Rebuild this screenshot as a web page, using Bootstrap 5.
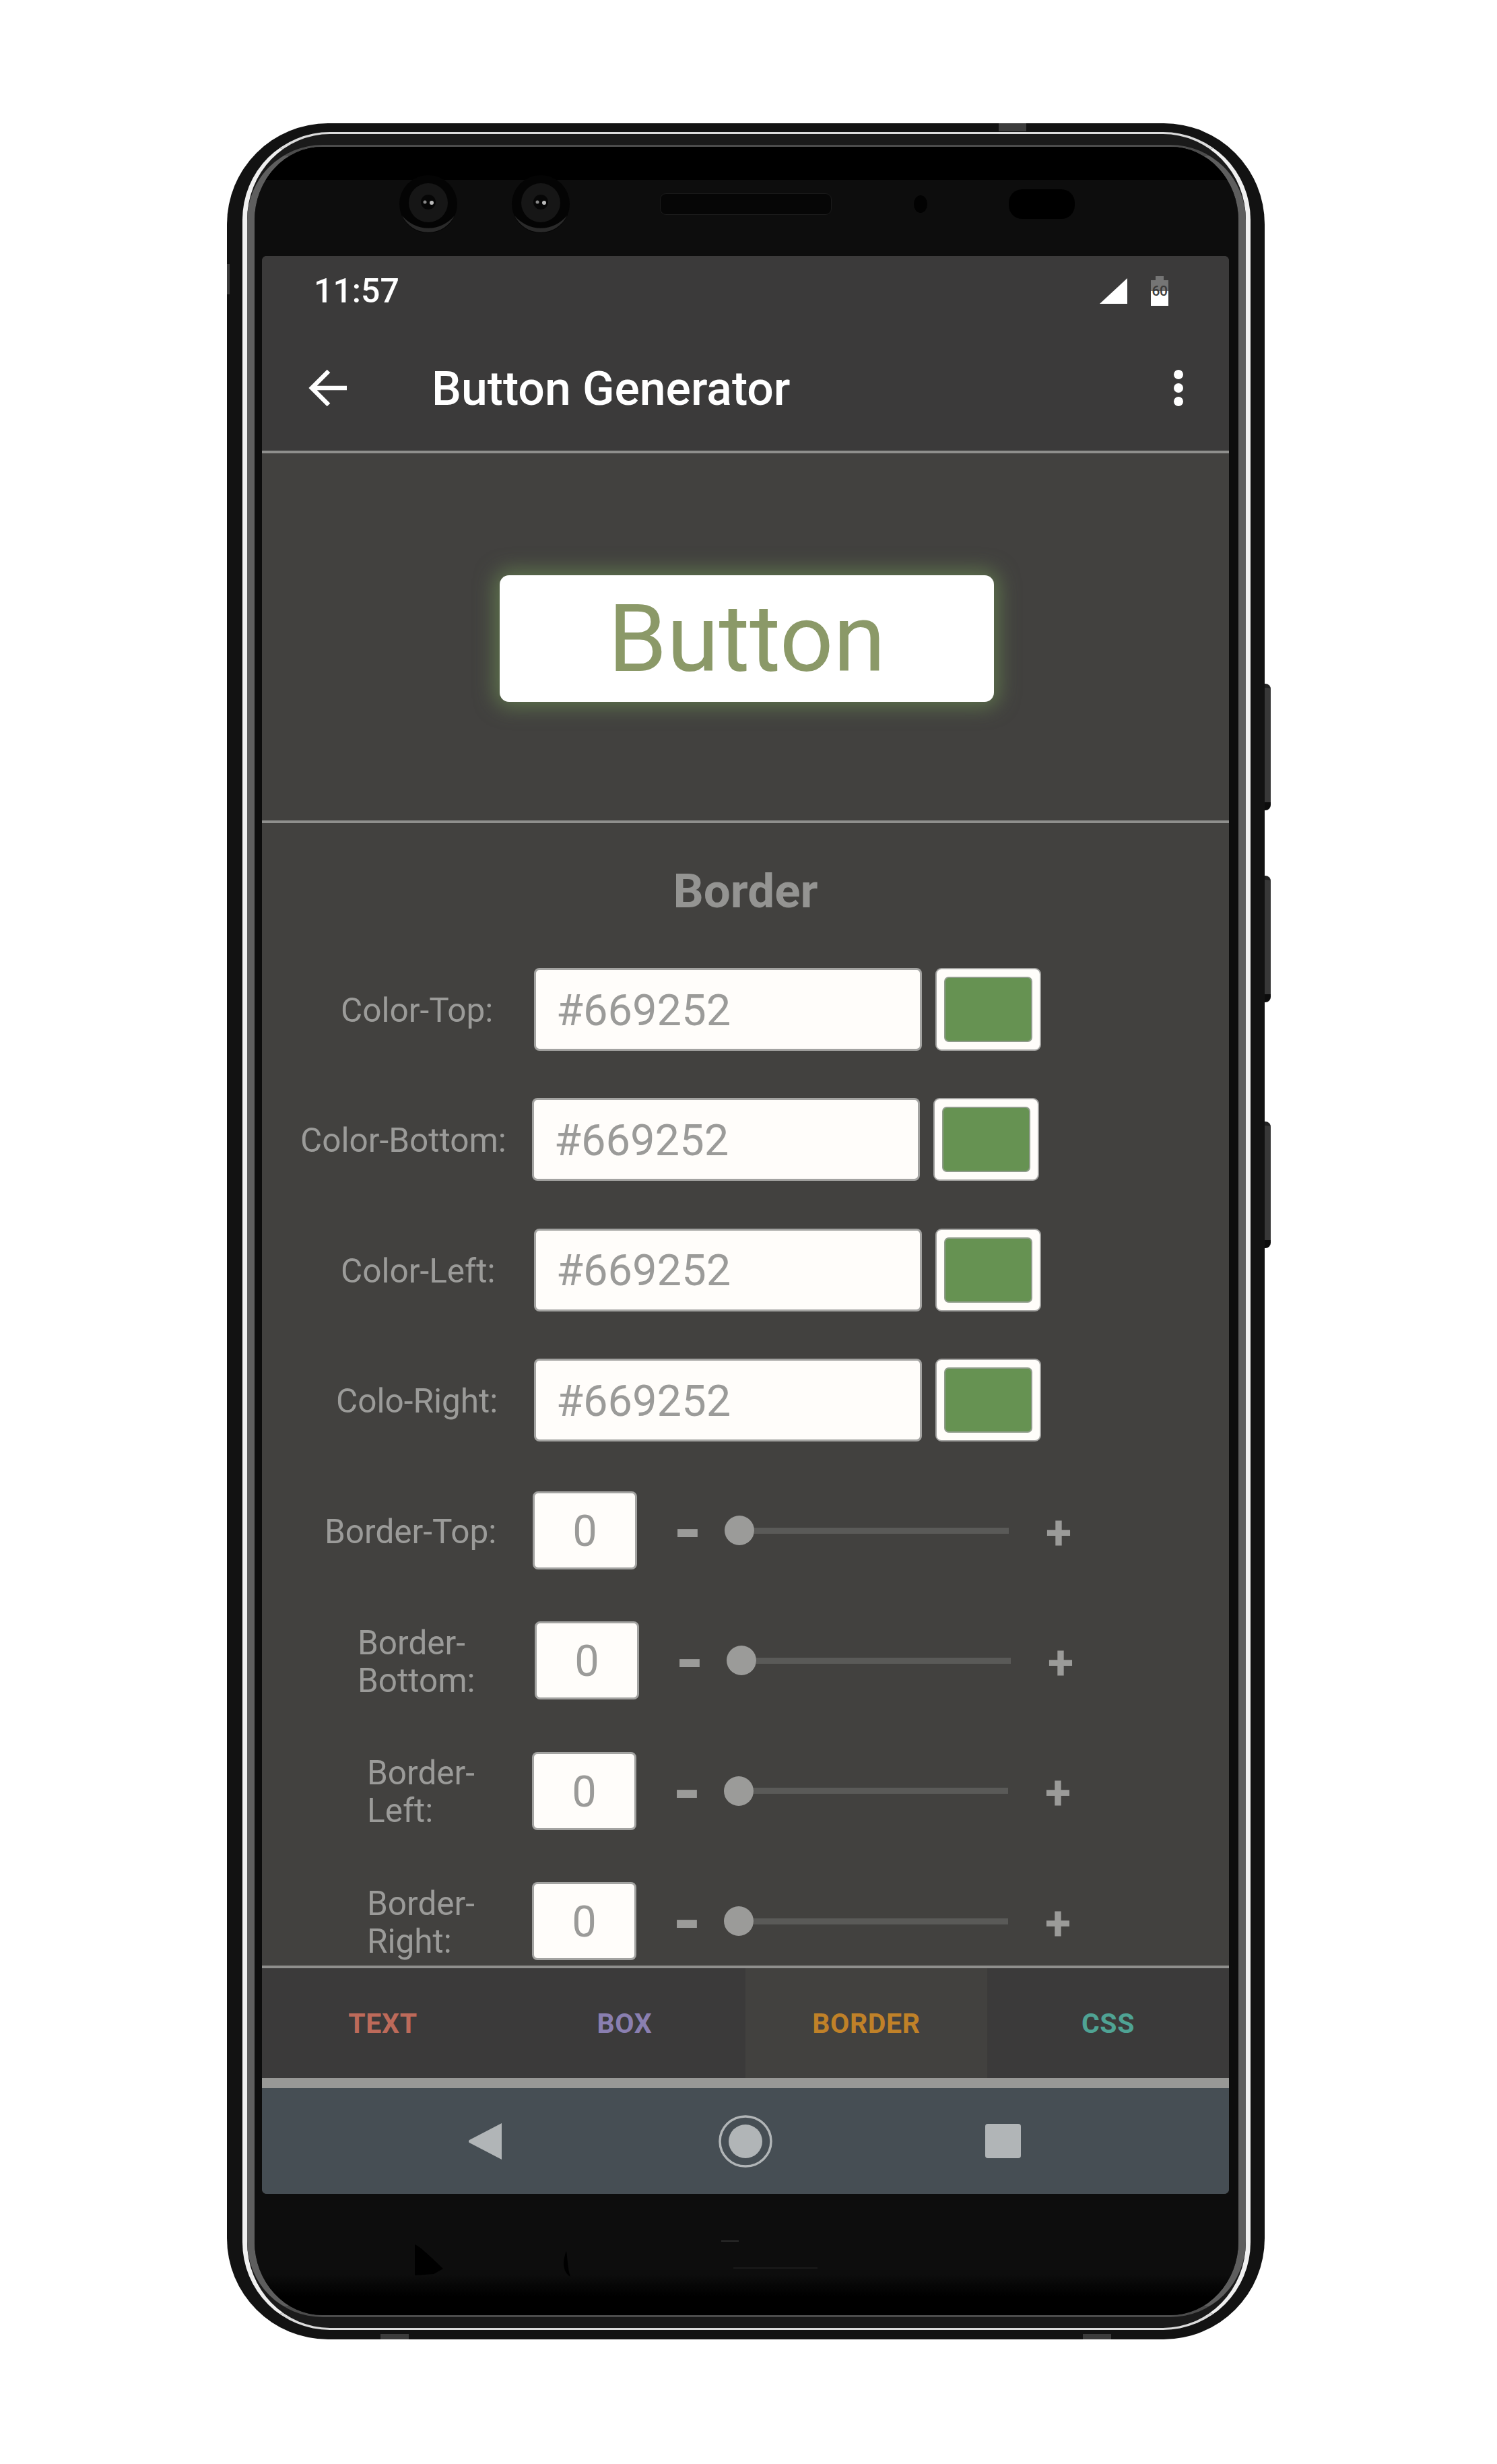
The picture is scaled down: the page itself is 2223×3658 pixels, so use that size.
<!DOCTYPE html>
<html lang="en">
<head>
<meta charset="utf-8">
<title>Button Generator</title>
<link rel="stylesheet" href="https://cdn.jsdelivr.net/npm/bootstrap@5.3.0/dist/css/bootstrap.min.css">
<style>
html,body{margin:0;background:#fff;font-family:Roboto,"Liberation Sans",sans-serif;}
.stage{padding:183px 0 0 337px;width:2223px;height:3658px;}
.ph-shell{position:relative;width:1541px;height:3290px;background:#121212;border-radius:150px;padding:13px 21px 14px 23px;flex:none;}
.ph-ring{height:100%;border-style:solid;border-color:#dcdcdc #f0f0f0;border-width:3px 7px;border-radius:130px;background:#1a1a1a;padding:16px 0;}
.ph-mid{height:100%;border-style:solid;border-color:#4c4c4c #5e5e5e;border-width:3px 11px;border-radius:112px;overflow:hidden;}
.ph-bezel{height:100%;padding:42px 14px 0 11px;background:linear-gradient(#000 49px,transparent 49px),linear-gradient(to top,#000 28px,#0d0d0d 60px);}
.ph-sensors{height:86px;margin:0 0 34px;}
.cam-a{margin-left:204px;}
.cam-b{margin-left:81px;}
.speaker{margin-left:134px;width:255px;height:32px;border-radius:9px;background:#060606;border:1px solid #1b1b1b;}
.sensor-dot{margin-left:122px;width:20px;height:26px;border-radius:50%;background:#020202;}
.sensor-pill{margin-left:121px;width:98px;height:44px;border-radius:20px;background:#000;}
.ph-side{width:9px;flex:none;}
.side-key{width:9px;height:188px;background:#383838;border-radius:0 8px 8px 0;border-top:6px solid #222;border-bottom:12px solid #0c0c0c;}
.key-a{margin-top:832px;}
.key-b{margin-top:97px;}
.key-c{margin-top:177px;}
.bump{position:absolute;background:#3c3c3c;}
.bump-top{left:1146px;top:0;width:41px;height:12px;}
.bump-left{left:0;top:209px;width:4px;height:45px;}
.bump-bl{left:228px;bottom:0;width:42px;height:8px;}
.bump-br{left:1271px;bottom:0;width:42px;height:8px;}
.screen{width:1436px;height:2877px;border-radius:7px;overflow:hidden;background:#42413f;}
.status-row{height:103px;background:#3b3a3a;padding:0 90px 0 77px;color:#fff;}
.status-time{font-size:50px;font-weight:500;line-height:1;}
.batt{margin-left:35px;width:26px;height:44px;position:relative;}
.batt-nub{width:12px;height:6px;background:#757575;margin:0 auto;}
.batt-body{width:26px;height:38px;background:linear-gradient(#757575 42%,#fff 42%);color:#3b3a3a;font-size:21px;font-weight:500;line-height:1;text-align:center;padding-top:6px;letter-spacing:-.5px;}
.app-row{height:186px;background:#3b3a3a;padding:0 68px 0 69px;color:#fff;}
.app-title{margin-left:126px;font-size:69.7px;font-weight:500;line-height:1;padding-top:3px;}
.rule-line{height:4px;background:#8f8f8d;flex:none;}
.preview{height:545px;padding:181px 0 0 353px;}
.demo-btn{width:734px;height:188px;background:#fff;border-radius:14px;box-shadow:0 0 30px 7px rgba(110,145,85,.65);color:#8b9968;font-size:140px;line-height:1;}
.form-area{height:1696px;overflow:hidden;}
.form-title{padding-top:61px;margin-bottom:74px;font-size:71px;font-weight:700;line-height:80px;color:#949492;text-align:center;}
.rows-wrap{gap:70.4px;}
.form-row{height:123px;}
.lab{flex:none;font-size:49.5px;line-height:56px;color:#9b9b99;padding-top:3px;}
.lab-1{width:404px;padding-left:117px;}
.lab-2{width:401px;padding-left:57px;}
.lab-3{width:404px;padding-left:117px;}
.lab-4{width:404px;padding-left:110px;}
.lab-5{width:402px;padding-left:93px;}
.lab-6{width:405px;padding-left:142px;}
.lab-7{width:401px;padding-left:156px;}
.field{font-family:Roboto,sans-serif;background:#fffdfa;border:3px solid #a3a3a1;border-radius:8px;color:#9b9b99;font-size:65px;line-height:1;flex:none;padding-top:3px;}
.field-hex{width:576px;height:123px;padding-left:30px;}
.field-num{width:155px;height:116px;justify-content:center;}
.swatch{margin-left:20px;width:157px;height:123px;background:#fffdfa;border:2px solid #a3a3a1;border-radius:9px;padding:11px;flex:none;}
.swatch-fill{height:100%;background:#669252;border:2px solid #8f9c8a;border-radius:7px;}
.step-minus{margin-left:54px;width:34px;height:60px;font-size:108px;font-weight:700;line-height:60px;color:#9b9b99;text-align:center;padding-top:0;flex:none;}
.slide{margin-left:42px;width:422px;height:44px;flex:none;}
.slide-thumb{width:44px;height:44px;border-radius:50%;background:#9b9b99;flex:none;}
.slide-line{height:9px;background:#5a5a58;flex:1;}
.step-plus{margin-left:54px;width:40px;font-size:70px;font-weight:700;line-height:60px;color:#9b9b99;text-align:center;padding-top:5px;flex:none;}
.tab-bar{height:163px;background:#3b3a3a;flex:none;}
.tab-cell{height:163px;font-size:41px;font-weight:700;line-height:1;letter-spacing:.6px;padding-top:2px;}
.tab-active{background:#42413f;}
.t-red{color:#bd6a5a;}
.t-vio{color:#8a7fb0;}
.t-ora{color:#c08128;}
.t-tea{color:#4fa394;}
.gray-bar{height:15px;background:#989896;flex:none;}
.nav-row{height:157px;background:#464e54;flex:none;}
.nav-a{margin-left:306px;}
.nav-b{margin-left:322px;}
.nav-c{margin-left:316px;}
.chin{height:180px;display:block;}
</style>
</head>
<body>
<div class="stage d-flex align-items-start">
  <div class="ph-shell">
    <span class="bump bump-top"></span><span class="bump bump-left"></span><span class="bump bump-bl"></span><span class="bump bump-br"></span>
    <div class="ph-ring">
      <div class="ph-mid">
        <div class="ph-bezel">
          <div class="ph-sensors d-flex align-items-center">
            <svg class="cam-a" width="86" height="86" viewBox="0 0 86 86"><circle cx="43" cy="43" r="43" fill="#040404"/><path d="M4 60a43 43 0 0 0 78 0a50 50 0 0 1-78 0z" fill="#2a2a2a"/><circle cx="43" cy="41" r="29" fill="#161616"/><circle cx="43" cy="40" r="11" fill="#060606"/><circle cx="38" cy="40" r="2.5" fill="#888"/><circle cx="48" cy="41" r="3" fill="#bbb"/></svg>
            <svg class="cam-b" width="86" height="86" viewBox="0 0 86 86"><circle cx="43" cy="43" r="43" fill="#040404"/><path d="M4 60a43 43 0 0 0 78 0a50 50 0 0 1-78 0z" fill="#2a2a2a"/><circle cx="43" cy="41" r="29" fill="#161616"/><circle cx="43" cy="40" r="11" fill="#060606"/><circle cx="38" cy="40" r="2.5" fill="#888"/><circle cx="48" cy="41" r="3" fill="#bbb"/></svg>
            <div class="speaker"></div>
            <div class="sensor-dot"></div>
            <div class="sensor-pill"></div>
          </div>
          <div class="screen d-flex flex-column">
            <div class="status-row d-flex align-items-center flex-none">
              <span class="status-time">11:57</span>
              <svg class="ms-auto" width="41" height="38" viewBox="0 0 41 38"><polygon points="41,0 41,38 0,38" fill="#fff"/></svg>
              <div class="batt"><div class="batt-nub"></div><div class="batt-body">60</div></div>
            </div>
            <div class="app-row d-flex align-items-center">
              <svg width="57" height="56" viewBox="0 0 57 56"><path d="M57 28H5M30 3L5 28l25 25" fill="none" stroke="#fff" stroke-width="6.5"/></svg>
              <span class="app-title">Button Generator</span>
              <svg class="ms-auto" width="14" height="54" viewBox="0 0 14 54"><circle cx="7" cy="7" r="7" fill="#fff"/><circle cx="7" cy="27" r="7" fill="#fff"/><circle cx="7" cy="47" r="7" fill="#fff"/></svg>
            </div>
            <div class="rule-line"></div>
            <div class="preview">
              <div class="demo-btn d-flex align-items-center justify-content-center">Button</div>
            </div>
            <div class="rule-line"></div>
            <div class="form-area">
              <div class="form-title">Border</div>
              <div class="rows-wrap d-flex flex-column">
                <div class="form-row d-flex align-items-center"><div class="lab lab-1">Color-Top:</div><div class="field field-hex d-flex align-items-center">#669252</div><div class="swatch"><div class="swatch-fill"></div></div></div>
                <div class="form-row d-flex align-items-center"><div class="lab lab-2">Color-Bottom:</div><div class="field field-hex d-flex align-items-center">#669252</div><div class="swatch"><div class="swatch-fill"></div></div></div>
                <div class="form-row d-flex align-items-center"><div class="lab lab-3">Color-Left:</div><div class="field field-hex d-flex align-items-center">#669252</div><div class="swatch"><div class="swatch-fill"></div></div></div>
                <div class="form-row d-flex align-items-center"><div class="lab lab-4">Colo-Right:</div><div class="field field-hex d-flex align-items-center">#669252</div><div class="swatch"><div class="swatch-fill"></div></div></div>
                <div class="form-row d-flex align-items-center"><div class="lab lab-5">Border-Top:</div><div class="field field-num d-flex align-items-center">0</div><div class="step-minus">-</div><div class="slide d-flex align-items-center"><div class="slide-thumb"></div><div class="slide-line"></div></div><div class="step-plus">+</div></div>
                <div class="form-row d-flex align-items-center"><div class="lab lab-6">Border-<br>Bottom:</div><div class="field field-num d-flex align-items-center">0</div><div class="step-minus">-</div><div class="slide d-flex align-items-center"><div class="slide-thumb"></div><div class="slide-line"></div></div><div class="step-plus">+</div></div>
                <div class="form-row d-flex align-items-center"><div class="lab lab-7">Border-<br>Left:</div><div class="field field-num d-flex align-items-center">0</div><div class="step-minus">-</div><div class="slide d-flex align-items-center"><div class="slide-thumb"></div><div class="slide-line"></div></div><div class="step-plus">+</div></div>
                <div class="form-row d-flex align-items-center"><div class="lab lab-7">Border-<br>Right:</div><div class="field field-num d-flex align-items-center">0</div><div class="step-minus">-</div><div class="slide d-flex align-items-center"><div class="slide-thumb"></div><div class="slide-line"></div></div><div class="step-plus">+</div></div>
              </div>
            </div>
            <div class="rule-line"></div>
            <div class="tab-bar row g-0">
              <div class="col-3 tab-cell t-red d-flex align-items-center justify-content-center">TEXT</div>
              <div class="col-3 tab-cell t-vio d-flex align-items-center justify-content-center">BOX</div>
              <div class="col-3 tab-cell tab-active t-ora d-flex align-items-center justify-content-center">BORDER</div>
              <div class="col-3 tab-cell t-tea d-flex align-items-center justify-content-center">CSS</div>
            </div>
            <div class="gray-bar"></div>
            <div class="nav-row d-flex align-items-center">
              <svg class="nav-a" width="50" height="54" viewBox="0 0 50 54"><path d="M50 0V54L2 29a2.5 2.5 0 0 1 0-4z" fill="#b1b5b7"/></svg>
              <svg class="nav-b" width="80" height="78" viewBox="0 0 80 78"><ellipse cx="40" cy="39" rx="38" ry="37" fill="none" stroke="#b1b5b7" stroke-width="3.5"/><ellipse cx="40" cy="39" rx="25" ry="25" fill="#b1b5b7"/></svg>
              <svg class="nav-c" width="53" height="51" viewBox="0 0 53 51"><rect width="53" height="51" rx="4" fill="#b1b5b7"/></svg>
            </div>
          </div>
          <svg class="chin" width="1436" height="180" viewBox="0 0 1436 180"><path d="M227 75c12 6 30 25 42 36l-14 8-28 2z" fill="#000"/><path d="M452 85c-6 15-6 30 6 38-4-12-4-26-6-38z" fill="#000"/><path d="M700 110h125" stroke="#1a1a1a" stroke-width="2"/><path d="M682 70h26" stroke="#2a2a2a" stroke-width="2"/></svg>
        </div>
      </div>
    </div>
  </div>
  <div class="ph-side">
    <div class="side-key key-a"></div>
    <div class="side-key key-b"></div>
    <div class="side-key key-c"></div>
  </div>
</div>
</body>
</html>
